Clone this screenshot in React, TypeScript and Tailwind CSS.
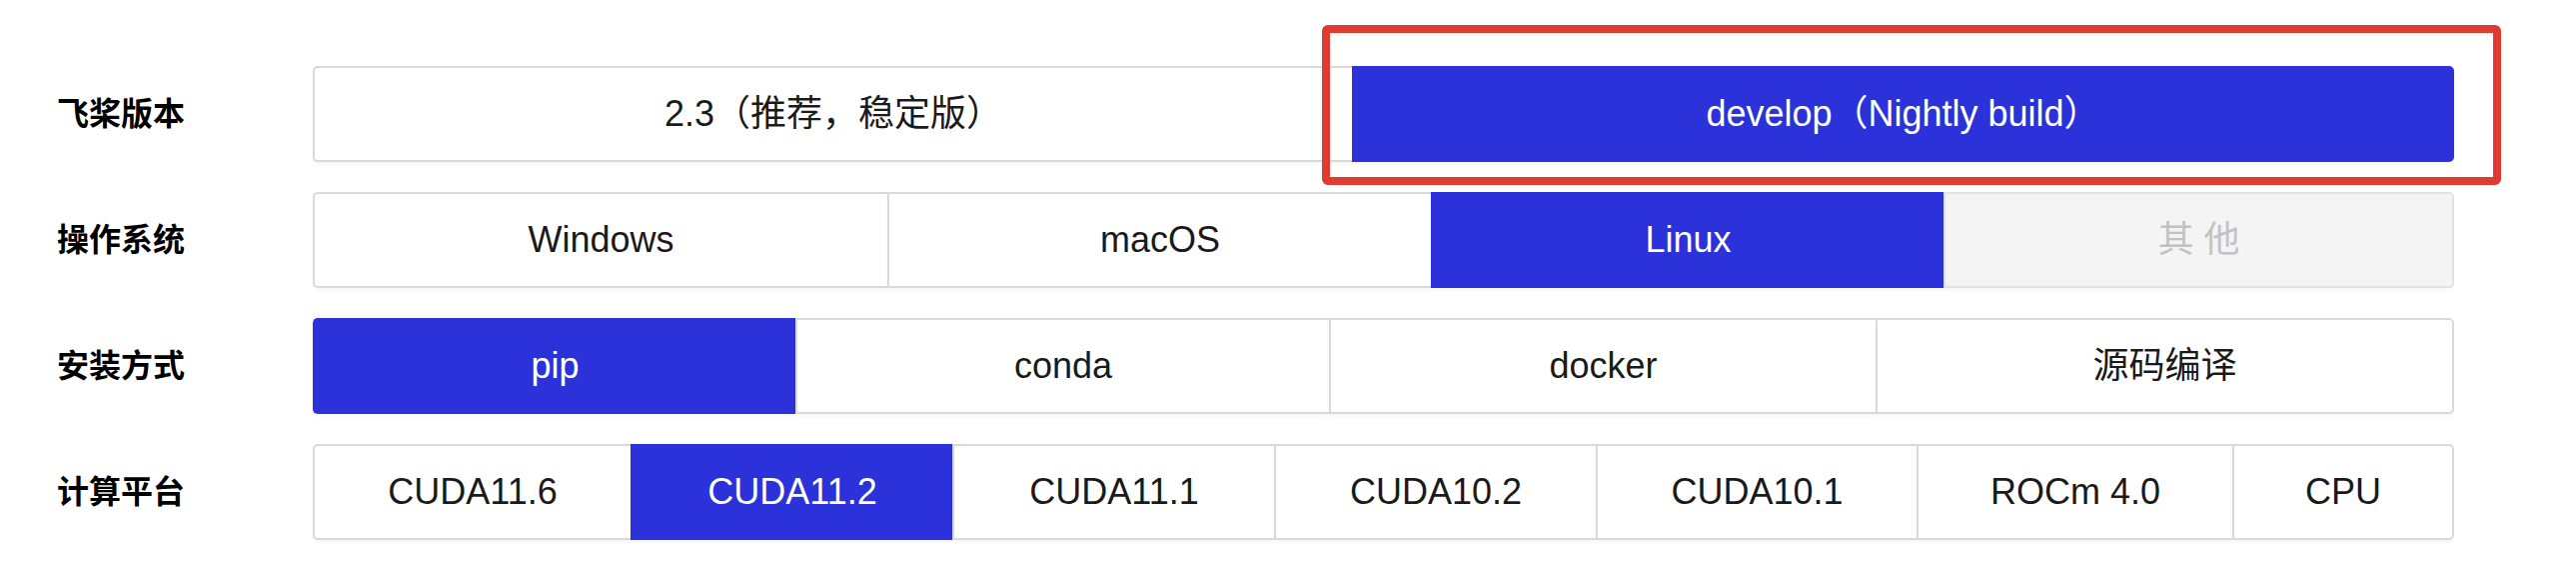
import React from "react";

type Cell = { label: string; w?: string; state?: "on" | "off" };

const rows: { title: string; cells: Cell[] }[] = [
  {
    title: "飞桨版本",
    cells: [
      { label: "2.3（推荐，稳定版）", w: "w-[1040px]" },
      { label: "develop（Nightly build）", state: "on" },
    ],
  },
  {
    title: "操作系统",
    cells: [
      { label: "Windows", w: "w-[575px]" },
      { label: "macOS", w: "w-[544px]" },
      { label: "Linux", w: "w-[513px]", state: "on" },
      { label: "其 他", state: "off" },
    ],
  },
  {
    title: "安装方式",
    cells: [
      { label: "pip", w: "w-[483px]", state: "on" },
      { label: "conda", w: "w-[534px]" },
      { label: "docker", w: "w-[547px]" },
      { label: "源码编译" },
    ],
  },
  {
    title: "计算平台",
    cells: [
      { label: "CUDA11.6", w: "w-[318px]" },
      { label: "CUDA11.2", w: "w-[322px]", state: "on" },
      { label: "CUDA11.1", w: "w-[322px]" },
      { label: "CUDA10.2", w: "w-[322px]" },
      { label: "CUDA10.1", w: "w-[321px]" },
      { label: "ROCm 4.0", w: "w-[316px]" },
      { label: "CPU" },
    ],
  },
];

function OptionCell({ cell, first, last }: { cell: Cell; first: boolean; last: boolean }) {
  const tone =
    cell.state === "on"
      ? "bg-[#2b32da] border-[#2b32da] text-white"
      : cell.state === "off"
        ? "bg-[#f4f4f4] border-[#e2e2e2] text-[#c2c2c2]"
        : "bg-white border-[#d9d9d9] text-[#1a1a1a]";
  return (
    <div
      className={`flex h-full items-center justify-center border-y-2 border-l-2 shadow-[0_3px_3px_rgba(0,0,0,0.03)] ${tone} ${
        cell.w ?? "flex-1"
      } ${first ? "rounded-l-[5px]" : ""} ${last ? "rounded-r-[5px] border-r-2" : ""}`}
    >
      {cell.label}
    </div>
  );
}

export default function App() {
  return (
    <div
      className="relative h-[572px] w-[2578px] bg-white pt-[66px]"
      style={{ fontFamily: '"Liberation Sans", "Noto Sans CJK SC", sans-serif' }}
    >
      <div className="flex flex-col gap-[30px]">
        {rows.map((r) => (
          <div key={r.title} className="flex h-[96px] items-center pl-[57px]">
            <span className="w-[256px] text-[32px] font-bold text-black">{r.title}</span>
            <div className="flex h-full w-[2143px] text-[36px]">
              {r.cells.map((c, i) => (
                <OptionCell key={c.label} cell={c} first={i === 0} last={i === r.cells.length - 1} />
              ))}
            </div>
          </div>
        ))}
      </div>
      {/* annotation frame around the selected version */}
      <div className="pointer-events-none absolute left-[1323px] top-[25px] h-[160px] w-[1180px] rounded-[6px] border-[8px] border-[#e03a31]" />
    </div>
  );
}
